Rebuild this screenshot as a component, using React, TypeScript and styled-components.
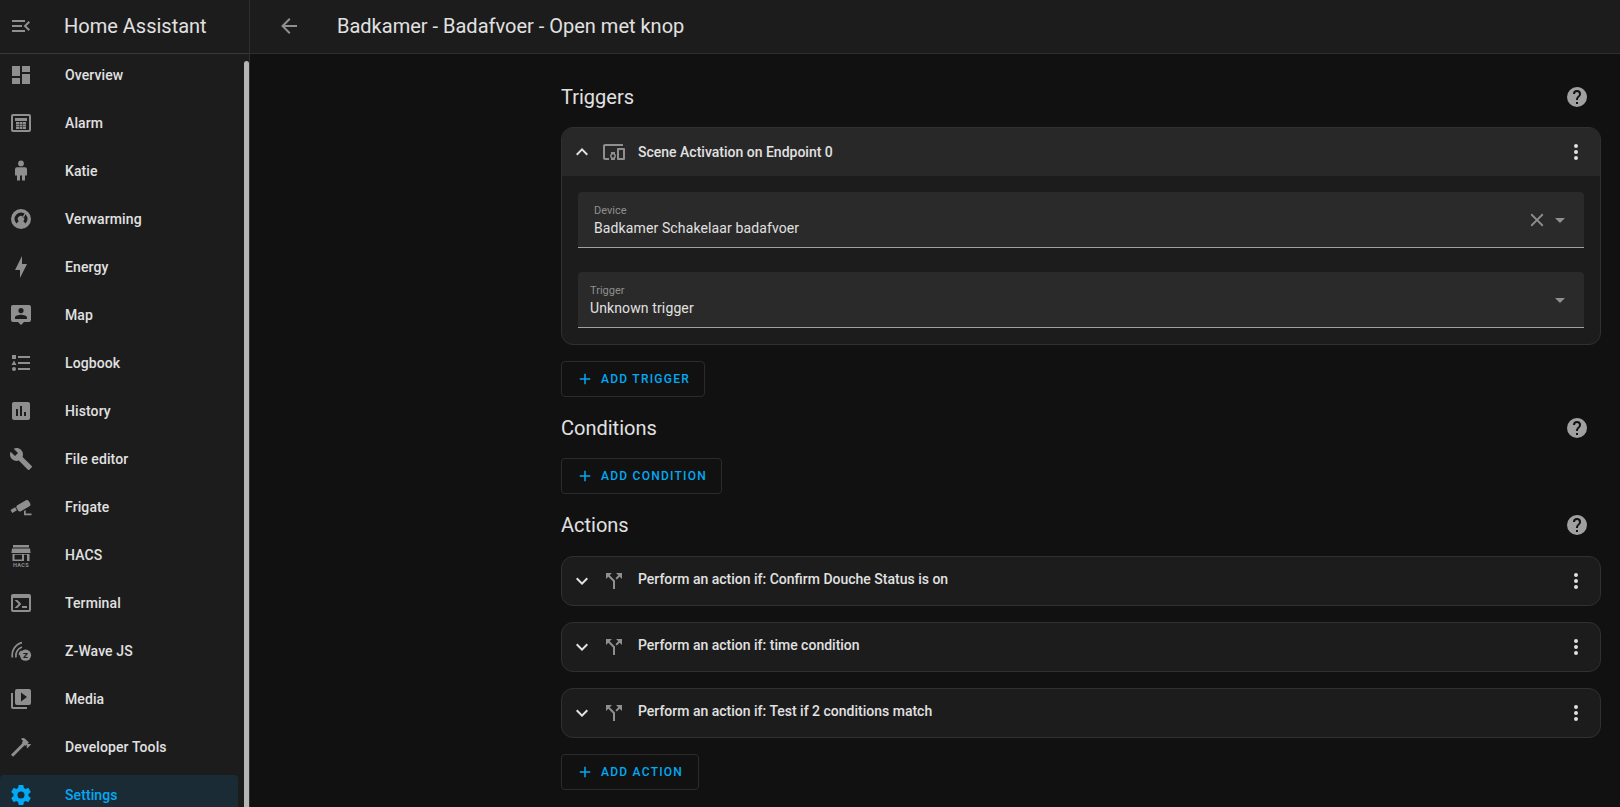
import React from 'react';
import styled, { createGlobalStyle } from 'styled-components';

const GlobalStyle = createGlobalStyle`
  html, body {
    margin: 0;
    height: 100%;
    background: #111111;
    overflow: hidden;
    font-family: Roboto, "Noto Sans", sans-serif;
  }
  #root { height: 100%; }
`;

const P = {
  menuOpen: 'M21,15.61L19.59,17L14.58,12L19.59,7L21,8.39L17.44,12L21,15.61M3,6H16V8H3V6M3,13V11H13V13H3M3,18V16H16V18H3Z',
  dashboard: 'M13,3V9H21V3M13,21H21V11H13M3,21H11V15H3M3,13H11V3H3V13Z',
  bolt: 'M11,15H6L13,1V9H18L11,23V15Z',
  list: 'M5,9.5L7.5,14H2.5L5,9.5M3,4H7V8H3V4M5,20A2,2 0 0,0 7,18A2,2 0 0,0 5,16A2,2 0 0,0 3,18A2,2 0 0,0 5,20M9,5V7H21V5H9M9,19H21V17H9V19M9,13H21V11H9V13Z',
  chart: 'M9 17H7V10H9V17M13 17H11V7H13V17M17 17H15V13H17V17M19 3H5C3.89 3 3 3.89 3 5V19C3 20.1 3.89 21 5 21H19C20.1 21 21 20.1 21 19V5C21 3.89 20.1 3 19 3Z',
  wrench: 'M22.7,19L13.6,9.9C14.5,7.6 14,4.9 12.1,3C10.1,1 7.1,0.6 4.7,1.7L9,6L6,9L1.6,4.7C0.4,7.1 0.9,10.1 2.9,12.1C4.8,14 7.5,14.5 9.8,13.6L18.9,22.7C19.3,23.1 19.9,23.1 20.3,22.7L22.6,20.4C23.1,20 23.1,19.3 22.7,19Z',
  console: 'M20,19V7H4V19H20M20,3A2,2 0 0,1 22,5V19A2,2 0 0,1 20,21H4A2,2 0 0,1 2,19V5C2,3.89 2.9,3 4,3H20M13,17V15H18V17H13M9.58,13L5.57,9H8.4L11.7,12.3C12.09,12.69 12.09,13.33 11.7,13.72L8.42,17H5.59L9.58,13Z',
  media: 'M4,6H2V20A2,2 0 0,0 4,22H18V20H4V6M20,2H8A2,2 0 0,0 6,4V16A2,2 0 0,0 8,18H20A2,2 0 0,0 22,16V4A2,2 0 0,0 20,2M12,14.5V5.5L18,10L12,14.5Z',
  hammer: 'M2 19.63L13.43 8.2L12.72 7.5L14.14 6.07L12 3.89C13.2 2.7 15.09 2.7 16.27 3.89L19.87 7.5L18.45 8.91H21.29L22 9.62L18.45 13.21L17.74 12.5V9.62L16.27 11.04L15.56 10.33L4.13 21.76L2 19.63Z',
  cog: 'M12,15.5A3.5,3.5 0 0,1 8.5,12A3.5,3.5 0 0,1 12,8.5A3.5,3.5 0 0,1 15.5,12A3.5,3.5 0 0,1 12,15.5M19.43,12.97C19.47,12.65 19.5,12.33 19.5,12C19.5,11.67 19.47,11.34 19.43,11L21.54,9.37C21.73,9.22 21.78,8.95 21.66,8.73L19.66,5.27C19.54,5.05 19.27,4.96 19.05,5.05L16.56,6.05C16.04,5.66 15.5,5.32 14.87,5.07L14.5,2.42C14.46,2.18 14.25,2 14,2H10C9.75,2 9.54,2.18 9.5,2.42L9.13,5.07C8.5,5.32 7.96,5.66 7.44,6.05L4.95,5.05C4.73,4.96 4.46,5.05 4.34,5.27L2.34,8.73C2.21,8.95 2.27,9.22 2.46,9.37L4.57,11C4.53,11.34 4.5,11.67 4.5,12C4.5,12.33 4.53,12.65 4.57,12.97L2.46,14.63C2.27,14.78 2.21,15.05 2.34,15.27L4.34,18.73C4.46,18.95 4.73,19.03 4.95,18.95L7.44,17.94C7.96,18.34 8.5,18.68 9.13,18.93L9.5,21.58C9.54,21.82 9.75,22 10,22H14C14.25,22 14.46,21.82 14.5,21.58L14.87,18.93C15.5,18.67 16.04,18.34 16.56,17.94L19.05,18.95C19.27,19.03 19.54,18.95 19.66,18.73L21.66,15.27C21.78,15.05 21.73,14.78 21.54,14.63L19.43,12.97Z',
  arrowLeft: 'M20,11V13H8L13.5,18.5L12.08,19.92L4.16,12L12.08,4.08L13.5,5.5L8,11H20Z',
  help: 'M15.07,11.25L14.17,12.17C13.45,12.89 13,13.5 13,15H11V14.5C11,13.39 11.45,12.39 12.17,11.67L13.41,10.41C13.78,10.05 14,9.55 14,9C14,7.89 13.1,7 12,7A2,2 0 0,0 10,9H8A4,4 0 0,1 12,5A4,4 0 0,1 16,9C16,9.88 15.64,10.67 15.07,11.25M13,19H11V17H13M12,2A10,10 0 0,0 2,12A10,10 0 0,0 12,22A10,10 0 0,0 22,12C22,6.47 17.5,2 12,2Z',
  chevronUp: 'M7.41,15.41L12,10.83L16.59,15.41L18,14L12,8L6,14L7.41,15.41Z',
  chevronDown: 'M7.41,8.58L12,13.17L16.59,8.58L18,10L12,16L6,10L7.41,8.58Z',
  dots: 'M12,16A2,2 0 0,1 14,18A2,2 0 0,1 12,20A2,2 0 0,1 10,18A2,2 0 0,1 12,16M12,10A2,2 0 0,1 14,12A2,2 0 0,1 12,14A2,2 0 0,1 10,12A2,2 0 0,1 12,10M12,4A2,2 0 0,1 14,6A2,2 0 0,1 12,8A2,2 0 0,1 10,6A2,2 0 0,1 12,4Z',
  close: 'M19,6.41L17.59,5L12,10.59L6.41,5L5,6.41L10.59,12L5,17.59L6.41,19L12,13.41L17.59,19L19,17.59L13.41,12L19,6.41Z',
  menuDown: 'M7,10L12,15L17,10H7Z',
  plus: 'M19,13H13V19H11V13H5V11H11V5H13V11H19V13Z',
  split: 'M14,4L16.29,6.29L13.41,9.17L14.83,10.59L17.71,7.71L20,10V4M10,4H4V10L6.29,7.71L11,12.41V20H13V11.59L7.71,6.29',
  devices: 'M3 6H21V4H3C1.9 4 1 4.9 1 6V18C1 19.1 1.9 20 3 20H7V18H3V6M13 12H9V13.78C8.39 14.33 8 15.11 8 16C8 16.89 8.39 17.67 9 18.22V20H13V18.22C13.61 17.67 14 16.88 14 16S13.61 14.33 13 13.78V12M11 17.5C10.17 17.5 9.5 16.83 9.5 16S10.17 14.5 11 14.5 12.5 15.17 12.5 16 11.83 17.5 11 17.5M22 8H16C15.5 8 15 8.5 15 9V19C15 19.5 15.5 20 16 20H22C22.5 20 23 19.5 23 19V9C23 8.5 22.5 8 22 8M21 18H17V10H21V18Z',
  panel: 'M4 3H20A2 2 0 0 1 22 5V19A2 2 0 0 1 20 21H4A2 2 0 0 1 2 19V5A2 2 0 0 1 4 3M4 5V19H20V5H4M6 7H18V10H6V7M7 11H10V13H7V11M10.5 11H13.5V13H10.5V11M14 11H17V13H14V11M7 13.5H10V15.5H7V13.5M10.5 13.5H13.5V15.5H10.5V13.5M14 13.5H17V15.5H14V13.5M7 16H10V18H7V16M10.5 16H13.5V18H10.5V16M14 16H17V18H14V16Z',
  person: 'M12,1.5A2.9,2.9 0 0,1 14.9,4.4A2.9,2.9 0 0,1 12,7.3A2.9,2.9 0 0,1 9.1,4.4A2.9,2.9 0 0,1 12,1.5M8,8.2H16A2,2 0 0,1 18,10.2V16.5H16V21.5H13V16.5H11V21.5H8V16.5H6V10.2A2,2 0 0,1 8,8.2Z',
  gauge: 'M12 2A10 10 0 1 0 12 22A10 10 0 1 0 12 2M7.4 16.6A6.5 6.5 0 1 1 16.6 16.6L14.3 14.3A3.2 3.2 0 1 0 9.7 14.3ZM13.5 10L15.5 6.5L16.5 7.2L14.8 10.8Z',
  mapPerson: 'M4 2H20A2 2 0 0 1 22 4V17A2 2 0 0 1 20 19H15L12 22L9 19H4A2 2 0 0 1 2 17V4A2 2 0 0 1 4 2M12 5A2.6 2.6 0 0 0 9.4 7.6A2.6 2.6 0 0 0 12 10.2A2.6 2.6 0 0 0 14.6 7.6A2.6 2.6 0 0 0 12 5M6 16H18V14.6C18 12.8 14.4 11.8 12 11.8C9.6 11.8 6 12.8 6 14.6V16Z',
  cctv: 'M17,5.2L8.3,10.2C7.3,10.8 7,12 7.6,12.9L9.1,15.5C9.6,16.5 10.9,16.8 11.8,16.3L20.5,11.3C21.5,10.7 21.8,9.5 21.2,8.5L19.7,5.9C19.1,5 18,4.6 17,5.2ZM15,16L16.7,15V18.5H22.5V20.2H15ZM6.1,12.2L1.5,14.9L3.3,17.9L7.9,15.3Z',
  store: 'M4 2H20V4.5H4V2M3 5.5H21L21.6 10H2.4L3 5.5M3.5 11H20.5V18H3.5V11M5.5 11.8V16.5H13V11.8H5.5M15 11.8V18H18V11.8H15Z',
};

const Icon = styled.svg.attrs({ viewBox: '0 0 24 24' })<{ $size?: number; $color?: string }>`
  width: ${p => p.$size || 24}px;
  height: ${p => p.$size || 24}px;
  flex: none;
  display: block;
  fill: ${p => p.$color || '#8f8f8f'};
`;

const MdiIcon = ({ path, size, color }: { path: string; size?: number; color?: string }) => (
  <Icon $size={size} $color={color}>
    <path fillRule="evenodd" d={path} />
  </Icon>
);

const HacsLabel = styled.text`
  font-family: Roboto, sans-serif;
  font-size: 5.6px;
  font-weight: 700;
  letter-spacing: 0.3px;
  fill: #8f8f8f;
`;

const HacsIcon = () => (
  <Icon>
    <path fillRule="evenodd" d={P.store} />
    <HacsLabel x="12" y="24" textAnchor="middle">HACS</HacsLabel>
  </Icon>
);

const WaveArc = styled.path`
  fill: none;
  stroke: #8f8f8f;
  stroke-width: 1.7;
`;

const WaveZ = styled.text`
  font-family: Roboto, sans-serif;
  font-size: 8px;
  font-weight: 900;
  fill: #1c1c1c;
`;

const ZWaveIcon = () => (
  <Icon>
    <WaveArc d="M3.4 18.5C2.2 11.5 6.5 5 13 3.6" />
    <WaveArc d="M7 18.5C6 14 8.6 9.4 13 8" />
    <WaveArc d="M10.6 16C10.3 14.6 11.2 13 12.8 12.3" />
    <circle cx="16.5" cy="16.2" r="5.6" />
    <WaveZ x="16.5" y="19" textAnchor="middle">Z</WaveZ>
  </Icon>
);

const Page = styled.div`
  display: flex;
  height: 807px;
  width: 1620px;
  overflow: hidden;
`;

const Sidebar = styled.aside`
  width: 249px;
  flex: none;
  background: #1c1c1c;
  border-right: 1px solid #2e2e2e;
  display: flex;
  flex-direction: column;
`;

const SideHeader = styled.div`
  height: 54px;
  flex: none;
  box-sizing: border-box;
  display: flex;
  align-items: center;
  padding-left: 9px;
  padding-bottom: 2px;
  gap: 31px;
  border-bottom: 1px solid #3a3a3a;
`;

const AppTitle = styled.div`
  font-size: 20px;
  font-weight: 400;
  color: #e1e1e1;
`;

const NavArea = styled.div`
  flex: 1;
  min-height: 0;
  display: flex;
  position: relative;
  overflow: hidden;
`;

const NavList = styled.nav`
  width: 238px;
  flex: none;
  display: flex;
  flex-direction: column;
  gap: 8px;
  padding-top: 1px;
`;

const NavItem = styled.div<{ $active?: boolean }>`
  height: 40px;
  flex: none;
  display: flex;
  align-items: center;
  gap: 32px;
  padding-left: 9px;
  border-radius: 4px;
  background: ${p => (p.$active ? '#1a2b35' : 'transparent')};
`;

const NavLabel = styled.span<{ $active?: boolean }>`
  font-size: 14px;
  font-weight: 500;
  letter-spacing: 0.1px;
  color: ${p => (p.$active ? '#03a9f4' : '#e1e1e1')};
`;

const ScrollThumb = styled.div`
  position: absolute;
  right: 0;
  top: 7px;
  bottom: 0;
  width: 5px;
  border-radius: 3px 3px 0 0;
  background: #b5b5b5;
`;

const Main = styled.main`
  flex: 1;
  min-width: 0;
  display: flex;
  flex-direction: column;
`;

const TopBar = styled.header`
  height: 54px;
  flex: none;
  box-sizing: border-box;
  display: flex;
  align-items: center;
  padding-left: 27px;
  padding-bottom: 1px;
  gap: 36px;
  background: #1c1c1c;
  border-bottom: 1px solid #2e2e2e;
`;

const PageTitle = styled.h1`
  margin: 0;
  font-size: 20px;
  font-weight: 400;
  color: #e1e1e1;
`;

const Content = styled.div`
  width: 1040px;
  margin-left: 311px;
  padding-top: 12px;
  display: flex;
  flex-direction: column;
`;

const SectionHead = styled.div<{ $height: number }>`
  display: flex;
  align-items: center;
  justify-content: space-between;
  height: ${p => p.$height}px;
  padding-right: 12px;
`;

const SectionTitle = styled.h2`
  margin: 0;
  font-size: 20px;
  font-weight: 400;
  color: #e1e1e1;
`;

const Card = styled.section`
  box-sizing: border-box;
  background: #1c1c1c;
  border: 1px solid #303030;
  border-radius: 12px;
  overflow: hidden;
  margin-bottom: 16px;
`;

const CardHead = styled.div<{ $open?: boolean }>`
  height: 48px;
  display: flex;
  align-items: center;
  padding: 0 12px 0 8px;
  background: ${p => (p.$open ? '#282828' : 'transparent')};
`;

const CardTitle = styled.div<{ $lift?: boolean }>`
  flex: 1;
  margin-left: 12px;
  margin-bottom: ${p => (p.$lift ? '4px' : '0')};
  font-size: 14px;
  font-weight: 500;
  color: #e1e1e1;
`;

const Chevron = styled.span`
  margin-right: 8px;
  display: flex;
`;

const CardBody = styled.div`
  padding: 16px;
  display: flex;
  flex-direction: column;
  gap: 24px;
`;

const Field = styled.div<{ $inset: number }>`
  height: 56px;
  box-sizing: border-box;
  background: #2a2a2a;
  border-radius: 4px 4px 0 0;
  border-bottom: 1px solid #a0a0a0;
  display: flex;
  align-items: center;
  padding-left: ${p => p.$inset}px;
  padding-right: 12px;
`;

const FieldText = styled.div`
  flex: 1;
  display: flex;
  flex-direction: column;
  padding-top: 3px;
`;

const FieldLabel = styled.div`
  font-size: 11px;
  line-height: 14px;
  color: #8f8f8f;
`;

const FieldValue = styled.div`
  font-size: 14px;
  line-height: 20px;
  letter-spacing: 0.12px;
  color: #e1e1e1;
`;

const OutlineButton = styled.button<{ $width: number }>`
  width: ${p => p.$width}px;
  height: 36px;
  flex: none;
  box-sizing: border-box;
  display: flex;
  align-items: center;
  gap: 7px;
  padding: 0 0 0 14px;
  background: transparent;
  border: 1px solid #2b2b2b;
  border-radius: 4px;
  font-family: Roboto, sans-serif;
  font-size: 12px;
  font-weight: 500;
  letter-spacing: 1.25px;
  color: #03a9f4;
`;

const navItems: { label: string; icon?: string; kind?: 'hacs' | 'zwave' }[] = [
  { label: 'Overview', icon: P.dashboard },
  { label: 'Alarm', icon: P.panel },
  { label: 'Katie', icon: P.person },
  { label: 'Verwarming', icon: P.gauge },
  { label: 'Energy', icon: P.bolt },
  { label: 'Map', icon: P.mapPerson },
  { label: 'Logbook', icon: P.list },
  { label: 'History', icon: P.chart },
  { label: 'File editor', icon: P.wrench },
  { label: 'Frigate', icon: P.cctv },
  { label: 'HACS', kind: 'hacs' },
  { label: 'Terminal', icon: P.console },
  { label: 'Z-Wave JS', kind: 'zwave' },
  { label: 'Media', icon: P.media },
  { label: 'Developer Tools', icon: P.hammer },
];

const actions = [
  'Perform an action if: Confirm Douche Status is on',
  'Perform an action if: time condition',
  'Perform an action if: Test if 2 conditions match',
];

const Help = () => <MdiIcon path={P.help} color="#a0a0a0" />;

const NavIcon = ({ icon, kind }: { icon?: string; kind?: 'hacs' | 'zwave' }) => {
  if (kind === 'hacs') return <HacsIcon />;
  if (kind === 'zwave') return <ZWaveIcon />;
  return <MdiIcon path={icon as string} />;
};

export default function App() {
  return (
    <>
      <GlobalStyle />
      <Page>
        <Sidebar>
          <SideHeader>
            <MdiIcon path={P.menuOpen} />
            <AppTitle>Home Assistant</AppTitle>
          </SideHeader>
          <NavArea>
            <NavList>
              {navItems.map(item => (
                <NavItem key={item.label}>
                  <NavIcon icon={item.icon} kind={item.kind} />
                  <NavLabel>{item.label}</NavLabel>
                </NavItem>
              ))}
              <NavItem $active>
                <MdiIcon path={P.cog} color="#03a9f4" />
                <NavLabel $active>Settings</NavLabel>
              </NavItem>
            </NavList>
            <ScrollThumb />
          </NavArea>
        </Sidebar>
        <Main>
          <TopBar>
            <MdiIcon path={P.arrowLeft} color="#8f8f8f" />
            <PageTitle>Badkamer - Badafvoer - Open met knop</PageTitle>
          </TopBar>
          <Content>
            <SectionHead $height={61}>
              <SectionTitle>Triggers</SectionTitle>
              <Help />
            </SectionHead>
            <Card>
              <CardHead $open>
                <Chevron><MdiIcon path={P.chevronUp} color="#e1e1e1" /></Chevron>
                <MdiIcon path={P.devices} />
                <CardTitle>Scene Activation on Endpoint 0</CardTitle>
                <MdiIcon path={P.dots} color="#e1e1e1" />
              </CardHead>
              <CardBody>
                <Field $inset={16}>
                  <FieldText>
                    <FieldLabel>Device</FieldLabel>
                    <FieldValue>Badkamer Schakelaar badafvoer</FieldValue>
                  </FieldText>
                  <MdiIcon path={P.close} size={22} />
                  <MdiIcon path={P.menuDown} />
                </Field>
                <Field $inset={12}>
                  <FieldText>
                    <FieldLabel>Trigger</FieldLabel>
                    <FieldValue>Unknown trigger</FieldValue>
                  </FieldText>
                  <MdiIcon path={P.menuDown} />
                </Field>
              </CardBody>
            </Card>
            <OutlineButton $width={144}>
              <MdiIcon path={P.plus} size={18} color="#03a9f4" />
              ADD TRIGGER
            </OutlineButton>
            <SectionHead $height={61}>
              <SectionTitle>Conditions</SectionTitle>
              <Help />
            </SectionHead>
            <OutlineButton $width={161}>
              <MdiIcon path={P.plus} size={18} color="#03a9f4" />
              ADD CONDITION
            </OutlineButton>
            <SectionHead $height={62}>
              <SectionTitle>Actions</SectionTitle>
              <Help />
            </SectionHead>
            {actions.map(text => (
              <Card key={text}>
                <CardHead>
                  <Chevron><MdiIcon path={P.chevronDown} color="#e1e1e1" /></Chevron>
                  <MdiIcon path={P.split} />
                  <CardTitle $lift>{text}</CardTitle>
                  <MdiIcon path={P.dots} color="#e1e1e1" />
                </CardHead>
              </Card>
            ))}
            <OutlineButton $width={138}>
              <MdiIcon path={P.plus} size={18} color="#03a9f4" />
              ADD ACTION
            </OutlineButton>
          </Content>
        </Main>
      </Page>
    </>
  );
}
